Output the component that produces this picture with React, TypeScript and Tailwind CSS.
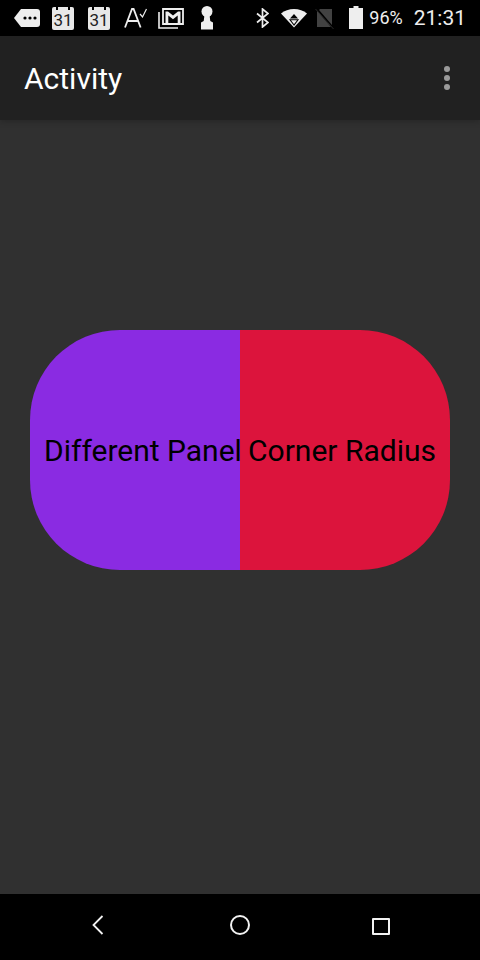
function StatusIcons() {
  return (
    <div className="flex items-center">
      {/* message bubble */}
      <svg className="ml-[14px] h-[20px] w-[26px]" viewBox="0 0 26 20">
        <path d="M7 1h16a3 3 0 0 1 3 3v12a3 3 0 0 1-3 3H7L0 10z" fill="#eeeeee" />
        <circle cx="11" cy="10" r="1.6" fill="#000" />
        <circle cx="16" cy="10" r="1.6" fill="#000" />
        <circle cx="21" cy="10" r="1.6" fill="#000" />
      </svg>
      <Calendar className="ml-[12px]" />
      <Calendar className="ml-[14px]" />
      {/* spell check A */}
      <svg className="ml-[14px] h-[22px] w-[23px]" viewBox="0 0 23 22">
        <path d="M1 20.500 8 2h1.600l7 18.500M3.800 14h11" fill="none" stroke="#eeeeee" strokeWidth="1.800" />
        <path d="m16 7 2.500 3L22.500 2" fill="none" stroke="#eeeeee" strokeWidth="1.200" />
      </svg>
      {/* gmail */}
      <svg className="ml-[11px] h-[22px] w-[26px]" viewBox="0 0 26 22">
        <path d="M1 5v16h19" fill="none" stroke="#eeeeee" strokeWidth="1.600" />
        <path d="M5 2h20v15H5z" fill="#000" stroke="#eeeeee" strokeWidth="1.800" />
        <path d="M7.500 4.500h2.500l5 4 5-4h2.500V16h-2.800V8.500l-4.700 3.700-4.700-3.700V16H7.500z" fill="#eeeeee" />
      </svg>
      {/* keyhole */}
      <svg className="ml-[16px] h-[24px] w-[14px]" viewBox="0 0 14 24">
        <circle cx="7" cy="5.500" r="5.500" fill="#eeeeee" />
        <path d="M4.500 9h5l.8 6 2.700 1.500V23.500H1v-7L3.700 15z" fill="#eeeeee" />
      </svg>
    </div>
  )
}

function Calendar({ className }: { className: string }) {
  return (
    <div className={`relative flex h-[23px] w-[22px] items-end justify-center rounded-[2px] bg-[#e8e8e8] ${className}`}>
      <span className="absolute left-[4px] top-0 h-[3px] w-[2px] bg-black" />
      <span className="absolute right-[4px] top-0 h-[3px] w-[2px] bg-black" />
      <span className="text-[17px] leading-[19px] text-[#222222]">31</span>
    </div>
  )
}

function SystemIcons() {
  return (
    <div className="flex items-center">
      {/* bluetooth */}
      <svg className="h-[20px] w-[13px]" viewBox="0 0 13 20">
        <path d="M1 5.500 12 14.500 6.500 19V1L12 5.500 1 14.500" fill="none" stroke="#eeeeee" strokeWidth="1.700" />
      </svg>
      {/* wifi with data arrows */}
      <svg className="ml-[12px] h-[20px] w-[26px]" viewBox="0 0 26 20">
        <path d="M0 5.500C3.500 2.500 8 1 13 1s9.500 1.500 13 4.500L13 19.500z" fill="#eeeeee" />
        <path d="m13 6 4 4.500H9z" fill="#000" />
        <path d="m13 17-4-5.200h8z" fill="none" stroke="#000" strokeWidth="1.100" />
      </svg>
      {/* no sim */}
      <svg className="ml-[8px] h-[21px] w-[20px]" viewBox="0 0 20 21">
        <path d="M5 1h12v18H2V4z" fill="#424242" />
        <path d="M1 0 19 21" stroke="#000" strokeWidth="2" />
        <path d="M0.500 1 18.500 21" stroke="#333333" strokeWidth="0.800" />
      </svg>
      {/* battery */}
      <svg className="mb-[2px] ml-[14px] h-[23px] w-[14px]" viewBox="0 0 14 23">
        <path d="M4.500 0h5v2H14v21H0V2h4.500z" fill="#eeeeee" />
      </svg>
      <span className="ml-[6px] text-[18px] leading-none text-[#eeeeee]">96%</span>
      <span className="ml-[11px] mr-[14px] text-[21px] leading-none text-[#eeeeee]">21:31</span>
    </div>
  )
}

export default function App() {
  return (
    <div className="flex h-[960px] w-[480px] flex-col bg-[#303030] font-['Roboto',sans-serif]">
      <div className="flex h-[36px] items-center justify-between bg-black">
        <StatusIcons />
        <SystemIcons />
      </div>

      <header className="relative z-10 flex h-[84px] items-center justify-between bg-[#212121] pl-[24px] pr-[30px] shadow-[0_2px_6px_rgba(0,0,0,0.2)]">
        <h1 className="pt-[1px] text-[30px] font-normal text-white">Activity</h1>
        <div className="flex flex-col gap-[3px]">
          <span className="size-[6px] rounded-full bg-[#9a9a9a]" />
          <span className="size-[6px] rounded-full bg-[#9a9a9a]" />
          <span className="size-[6px] rounded-full bg-[#9a9a9a]" />
        </div>
      </header>

      <main className="flex-1 px-[30px] pt-[210px]">
        <div className="flex h-[240px]">
          <div className="relative z-10 flex w-1/2 items-center whitespace-nowrap rounded-l-[90px] bg-[#8a2be2] pl-[14px] pt-[1px] text-[30px] text-black">
            Different Panel
          </div>
          <div className="flex w-1/2 items-center justify-end whitespace-nowrap rounded-r-[90px] bg-[#dc143c] pr-[14px] pt-[1px] text-[30px] text-black">
            Corner Radius
          </div>
        </div>
      </main>

      <nav className="flex h-[66px] items-center justify-center bg-black pb-[4px]">
        <div className="flex w-[142px] justify-center">
          <svg className="h-[20px] w-[12px]" viewBox="0 0 12 20">
            <path d="M10.500 1 1.500 10l9 9" fill="none" stroke="#f2f2f2" strokeWidth="1.800" />
          </svg>
        </div>
        <div className="flex w-[142px] justify-center">
          <span className="size-[20px] rounded-full border-2 border-[#f2f2f2]" />
        </div>
        <div className="flex w-[142px] justify-center">
          <span className="mr-[2px] mt-[3px] h-[17px] w-[18px] rounded-[1px] border-2 border-[#f2f2f2]" />
        </div>
      </nav>
    </div>
  )
}
